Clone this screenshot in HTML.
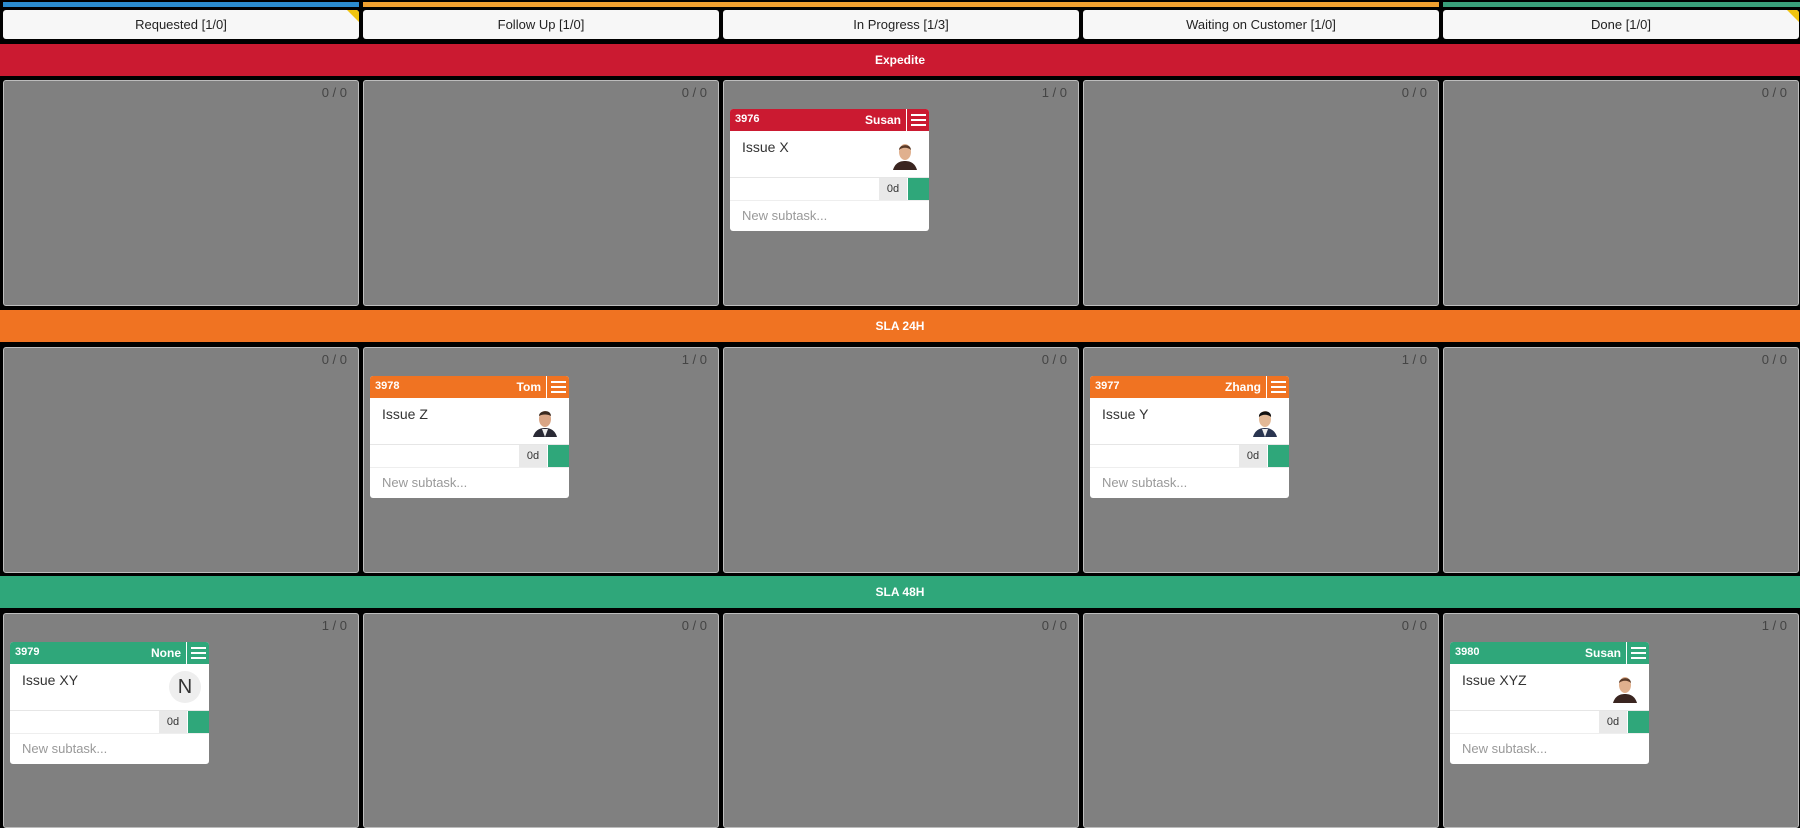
<!DOCTYPE html><html><head><style>
*{box-sizing:border-box;margin:0;padding:0}
body{width:1800px;height:817px;background:#000;position:relative;overflow:hidden;font-family:"Liberation Sans",sans-serif}
.a{position:absolute}
.bar{height:5px;top:2px}
.hd{top:10px;height:29px;width:356px;background:#f7f7f7;border-radius:3px;text-align:center;line-height:29px;font-size:13px;color:#222}
.tri{position:absolute;right:0;top:0;width:0;height:0;border-top:12px solid #f1c40f;border-left:12px solid transparent;border-top-right-radius:3px}
.band{left:0;width:1800px;height:32px;color:#fff;font-size:12px;font-weight:bold;text-align:center;line-height:32px}
.cell{width:356px;background:#808080;border:1px solid #bdbdbd;border-radius:3px}
.cnt{position:absolute;right:11px;top:4px;font-size:13px;color:#444}
.card{position:absolute;left:6px;top:28px;width:199px;height:122px;background:#fff;border-radius:3px;overflow:hidden}
.ch{height:22px;color:#fff;font-size:12px;font-weight:bold;position:relative}
.ch .id{position:absolute;left:5px;top:4px;font-size:11px}
.ch .nm{position:absolute;right:28px;top:4px;font-size:12px}
.ch .mn{position:absolute;right:0;top:0;width:23px;height:22px;border-left:1px solid #fff}
.ch .mn i{position:absolute;left:4px;width:15px;height:2px;background:#fff}
.bd{height:47px;position:relative;font-size:14px;color:#333;border-bottom:1px solid #e6e6e6}
.bd .t{position:absolute;left:12px;top:8px}
.av{position:absolute;right:8px;top:7px;width:32px;height:32px}
.ft{height:23px;position:relative;border-bottom:1px solid #eee}
.ft .d{position:absolute;right:22px;top:0;width:28px;height:22px;background:#e9e9e9;font-size:11px;color:#333;text-align:center;line-height:22px}
.ft .g{position:absolute;right:0;top:0;width:21px;height:22px;background:#2fa77a}
.sb{font-size:13px;color:#999;padding:7px 12px}
</style></head><body>
<div class="a bar" style="left:3px;width:356px;background:#2b8ccf"></div>
<div class="a bar" style="left:363px;width:1076px;background:#f0a030"></div>
<div class="a bar" style="left:1443px;width:357px;background:#3a9f7a"></div>
<div class="a hd" style="left:3px">Requested [1/0]<span class="tri"></span></div>
<div class="a hd" style="left:363px">Follow Up [1/0]</div>
<div class="a hd" style="left:723px">In Progress [1/3]</div>
<div class="a hd" style="left:1083px">Waiting on Customer [1/0]</div>
<div class="a hd" style="left:1443px">Done [1/0]<span class="tri"></span></div>
<div class="a band" style="top:44px;background:#cb1a31">Expedite</div>
<div class="a band" style="top:310px;background:#f07322">SLA 24H</div>
<div class="a band" style="top:576px;background:#2fa77a">SLA 48H</div>

<div class="a cell" style="left:3px;top:80px;height:226px"><span class="cnt">0 / 0</span></div>
<div class="a cell" style="left:363px;top:80px;height:226px"><span class="cnt">0 / 0</span></div>
<div class="a cell" style="left:723px;top:80px;height:226px"><span class="cnt">1 / 0</span>
<div class="card"><div class="ch" style="background:#cb1a31"><span class="id">3976</span><span class="nm">Susan</span><span class="mn"><i style="top:5px"></i><i style="top:10px"></i><i style="top:15px"></i></span></div>
<div class="bd"><span class="t">Issue X</span><svg class="av" viewBox="0 0 32 32"><rect width="32" height="32" fill="#fff"/><path d="M4 32c2-7 7-9 12-9s10 2 12 9z" fill="#3a2520"/><ellipse cx="16" cy="14" rx="6" ry="8" fill="#e0b08e"/><path d="M10 12c0-6 12-7 12 0-3-3-9-3-12 0z" fill="#5a3a28"/></svg></div>
<div class="ft"><span class="d">0d</span><span class="g"></span></div><div class="sb">New subtask...</div></div></div>
<div class="a cell" style="left:1083px;top:80px;height:226px"><span class="cnt">0 / 0</span></div>
<div class="a cell" style="left:1443px;top:80px;height:226px"><span class="cnt">0 / 0</span></div>

<div class="a cell" style="left:3px;top:347px;height:226px"><span class="cnt">0 / 0</span></div>
<div class="a cell" style="left:363px;top:347px;height:226px"><span class="cnt">1 / 0</span>
<div class="card"><div class="ch" style="background:#f07322"><span class="id">3978</span><span class="nm">Tom</span><span class="mn"><i style="top:5px"></i><i style="top:10px"></i><i style="top:15px"></i></span></div>
<div class="bd"><span class="t">Issue Z</span><svg class="av" viewBox="0 0 32 32"><rect width="32" height="32" fill="#fff"/><path d="M4 32c2-7 7-9 12-9s10 2 12 9z" fill="#2a2a35"/><path d="M13 24l3 8 3-8z" fill="#eee"/><ellipse cx="16" cy="14" rx="6" ry="8" fill="#d9a585"/><path d="M10 11c0-6 12-7 12 0-3-2-9-2-12 0z" fill="#3a2a20"/></svg></div>
<div class="ft"><span class="d">0d</span><span class="g"></span></div><div class="sb">New subtask...</div></div></div>
<div class="a cell" style="left:723px;top:347px;height:226px"><span class="cnt">0 / 0</span></div>
<div class="a cell" style="left:1083px;top:347px;height:226px"><span class="cnt">1 / 0</span>
<div class="card"><div class="ch" style="background:#f07322"><span class="id">3977</span><span class="nm">Zhang</span><span class="mn"><i style="top:5px"></i><i style="top:10px"></i><i style="top:15px"></i></span></div>
<div class="bd"><span class="t">Issue Y</span><svg class="av" viewBox="0 0 32 32"><rect width="32" height="32" fill="#fff"/><path d="M4 32c2-7 7-9 12-9s10 2 12 9z" fill="#2a3550"/><path d="M13 24l3 8 3-8z" fill="#eee"/><ellipse cx="16" cy="14" rx="6" ry="8" fill="#e2b896"/><path d="M10 12c-1-7 13-8 12 0-3-3-9-3-12 0z" fill="#111"/></svg></div>
<div class="ft"><span class="d">0d</span><span class="g"></span></div><div class="sb">New subtask...</div></div></div>
<div class="a cell" style="left:1443px;top:347px;height:226px"><span class="cnt">0 / 0</span></div>

<div class="a cell" style="left:3px;top:613px;height:215px"><span class="cnt">1 / 0</span>
<div class="card"><div class="ch" style="background:#2fa77a"><span class="id">3979</span><span class="nm">None</span><span class="mn"><i style="top:5px"></i><i style="top:10px"></i><i style="top:15px"></i></span></div>
<div class="bd"><span class="t">Issue XY</span><div class="av" style="border-radius:50%;background:#eee;text-align:center;line-height:32px;font-size:20px;color:#333">N</div></div>
<div class="ft"><span class="d">0d</span><span class="g"></span></div><div class="sb">New subtask...</div></div></div>
<div class="a cell" style="left:363px;top:613px;height:215px"><span class="cnt">0 / 0</span></div>
<div class="a cell" style="left:723px;top:613px;height:215px"><span class="cnt">0 / 0</span></div>
<div class="a cell" style="left:1083px;top:613px;height:215px"><span class="cnt">0 / 0</span></div>
<div class="a cell" style="left:1443px;top:613px;height:215px"><span class="cnt">1 / 0</span>
<div class="card"><div class="ch" style="background:#2fa77a"><span class="id">3980</span><span class="nm">Susan</span><span class="mn"><i style="top:5px"></i><i style="top:10px"></i><i style="top:15px"></i></span></div>
<div class="bd"><span class="t">Issue XYZ</span><svg class="av" viewBox="0 0 32 32"><rect width="32" height="32" fill="#fff"/><path d="M4 32c2-7 7-9 12-9s10 2 12 9z" fill="#3a2520"/><ellipse cx="16" cy="14" rx="6" ry="8" fill="#e0b08e"/><path d="M10 12c0-6 12-7 12 0-3-3-9-3-12 0z" fill="#5a3a28"/></svg></div>
<div class="ft"><span class="d">0d</span><span class="g"></span></div><div class="sb">New subtask...</div></div></div>
</body></html>
